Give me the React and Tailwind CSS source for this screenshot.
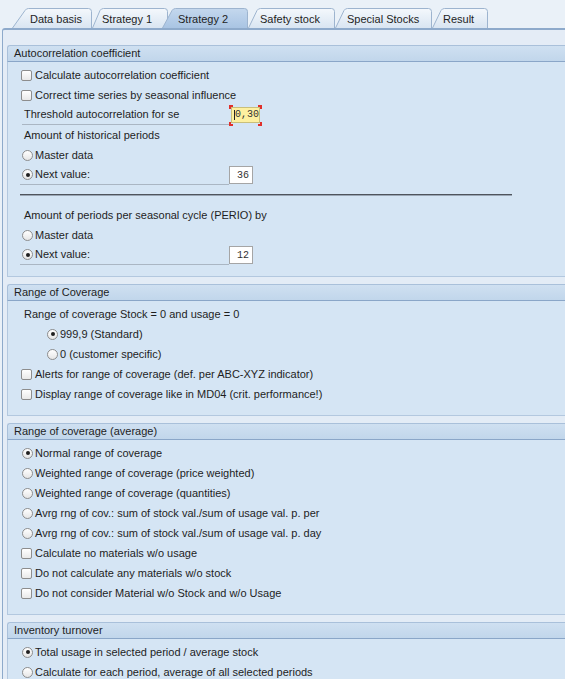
import React from 'react';

const tabs = [
  { label: 'Data basis', w: 80, slant: 13, pl: 18, ml: 12 },
  { label: 'Strategy 1', w: 76, slant: 8, pl: 10, ml: 0 },
  { label: 'Strategy 2', w: 86, slant: 10, pl: 16, ml: -6, active: true },
  { label: 'Safety stock', w: 87, slant: 9, pl: 12, ml: 0 },
  { label: 'Special Stocks', w: 97, slant: 9, pl: 12, ml: 0 },
  { label: 'Result', w: 56, slant: 9, pl: 11, ml: 0 },
];

function Tab({ tab }) {
  const h = 20;
  const { w, slant } = tab;
  const d = `M0.5,${h} L${slant},2.5 Q${slant + 1.2},0.5 ${slant + 3.5},0.5 L${w - 3.5},0.5 Q${w - 0.5},0.5 ${w - 0.5},3.5 L${w - 0.5},${h}`;
  const id = tab.active ? 'tabActive' : 'tabIdle';
  return (
    <div
      className={`relative h-[20px] shrink-0 ${tab.active ? 'z-10' : ''}`}
      style={{ width: tab.w, marginLeft: tab.ml }}
    >
      <svg className="absolute inset-0" width={w} height={h}>
        <defs>
          <linearGradient id={id} x1="0" y1="0" x2="0" y2="1">
            <stop offset="0" stopColor={tab.active ? '#c4d8ee' : '#f4f8fc'} />
            <stop offset="1" stopColor={tab.active ? '#a9c4e3' : '#d9e5f2'} />
          </linearGradient>
        </defs>
        <path d={d} fill={`url(#${id})`} stroke="#9db4cf" strokeWidth="1" />
      </svg>
      <span
        className="relative block leading-[20px] text-[11px] text-[#1e1e1e] pt-[1px]"
        style={{ paddingLeft: tab.pl }}
      >
        {tab.label}
      </span>
    </div>
  );
}

function Check({ label }) {
  return (
    <div className="h-[20px] flex items-center pl-[13px]">
      <span className="w-[11px] h-[11px] shrink-0 rounded-[2px] border border-[#8d8d8d] bg-linear-to-b from-white to-[#e9e9e9]" />
      <span className="ml-[3px]">{label}</span>
    </div>
  );
}

function Radio({ label, checked, indent = false }) {
  return (
    <div className={`h-[20px] flex items-center ${indent ? 'pl-[39px]' : 'pl-[14px]'}`}>
      <Dot checked={checked} />
      <span className="ml-[2px]">{label}</span>
    </div>
  );
}

function Dot({ checked }) {
  return (
    <span className="w-[11px] h-[11px] shrink-0 rounded-full border border-[#8d8d8d] bg-linear-to-b from-white to-[#e6e6e6] flex items-center justify-center">
      {checked && <span className="w-[4px] h-[4px] rounded-full bg-[#1f1f1f]" />}
    </span>
  );
}

function Label({ children, indentLeft = 'pl-[16px]' }) {
  return <div className={`h-[20px] flex items-center ${indentLeft}`}>{children}</div>;
}

function NextValue({ value }) {
  return (
    <div className="h-[20px] flex items-center pl-[12px]">
      <div className="w-[209px] h-[20px] flex items-center pl-[2px] border-b border-[#aab6c3]">
        <Dot checked />
        <span className="ml-[2px]">Next value:</span>
      </div>
      <div className="w-[24px] h-[18px] bg-white border border-[#a5a5a5] flex items-center justify-end pr-[3px] text-[10px] font-['Liberation_Mono',monospace] text-[#333]">
        {value}
      </div>
    </div>
  );
}

function Section({ title, children, last }) {
  return (
    <div>
      <div className="h-[17px] flex items-center pl-[6px] border-t border-b border-l border-t-[#a9c0da] border-b-[#8aa6c8] border-l-[#a9c0da] rounded-tl-[3px] bg-linear-to-b from-[#cfe0f1] to-[#c1d6eb]">
        {title}
      </div>
      <div className={`bg-[#d5e5f4] border-l border-[#b3c8df] pt-[3px] ${last ? '' : 'pb-[11px] border-b'}`}>
        {children}
      </div>
      {!last && <div className="h-[7px] bg-[#e3ecf6]" />}
    </div>
  );
}

export default function App() {
  return (
    <div className="w-[583px] h-[679px] bg-white overflow-hidden font-['Liberation_Sans',Arial,sans-serif] text-[11px] text-[#1e1e1e]">
      <div className="w-[565px] h-full bg-[#eaf1f8]">
        <div className="h-[28px] pt-[8px] flex items-end">
          {tabs.map((t) => (
            <Tab key={t.label} tab={t} />
          ))}
        </div>
        <div className="ml-[2px] h-full border-t-2 border-l border-[#8eaacb] rounded-tl-[3px] bg-[#e4ecf6] pl-[4px] pt-[15px]">
          <Section title="Autocorrelation coefficient">
            <Check label="Calculate autocorrelation coefficient" />
            <Check label="Correct time series by seasonal influence" />
            <div className="h-[20px] flex items-center pl-[14px]">
              <div className="w-[207px] h-[20px] flex items-center pl-[2px] border-b border-[#aab6c3]">
                Threshold autocorrelation for se
              </div>
              <div className="relative w-[33px] h-[21px] flex items-center justify-center">
                <span className="absolute left-0 top-0 w-[4px] h-[4px] border-t-2 border-l-2 border-[#e0302a]" />
                <span className="absolute right-0 top-0 w-[4px] h-[4px] border-t-2 border-r-2 border-[#e0302a]" />
                <span className="absolute left-0 bottom-0 w-[4px] h-[4px] border-b-2 border-l-2 border-[#e0302a]" />
                <span className="absolute right-0 bottom-0 w-[4px] h-[4px] border-b-2 border-r-2 border-[#e0302a]" />
                <div className="w-[29px] h-[16px] bg-[#fdf0a0] border border-[#c9bf7a] flex items-center pl-[2px] text-[10px] font-['Liberation_Mono',monospace] text-[#333]">
                  <span className="border-l border-[#222] leading-[10px]">0,30</span>
                </div>
              </div>
            </div>
            <Label>Amount of historical periods</Label>
            <Radio label="Master data" />
            <NextValue value="36" />
            <div className="h-[20px] flex items-center pl-[12px]">
              <div className="w-[492px] border-t border-b border-t-[#4f545c] border-b-[#9aa6b4]" />
            </div>
            <Label>Amount of periods per seasonal cycle (PERIO) by</Label>
            <Radio label="Master data" />
            <NextValue value="12" />
          </Section>
          <Section title="Range of Coverage">
            <Label>Range of coverage Stock = 0 and usage = 0</Label>
            <Radio label="999,9 (Standard)" checked indent />
            <Radio label="0 (customer specific)" indent />
            <Check label="Alerts for range of coverage (def. per ABC-XYZ indicator)" />
            <Check label="Display range of coverage like in MD04 (crit. performance!)" />
          </Section>
          <Section title="Range of coverage (average)">
            <Radio label="Normal range of coverage" checked />
            <Radio label="Weighted range of coverage (price weighted)" />
            <Radio label="Weighted range of coverage (quantities)" />
            <Radio label="Avrg rng of cov.: sum of stock val./sum of usage val. p. per" />
            <Radio label="Avrg rng of cov.: sum of stock val./sum of usage val. p. day" />
            <Check label="Calculate no materials w/o usage" />
            <Check label="Do not calculate any materials w/o stock" />
            <Check label="Do not consider Material w/o Stock and w/o Usage" />
          </Section>
          <Section title="Inventory turnover" last>
            <Radio label="Total usage in selected period / average stock" checked />
            <Radio label="Calculate for each period, average of all selected periods" />
          </Section>
        </div>
      </div>
    </div>
  );
}
